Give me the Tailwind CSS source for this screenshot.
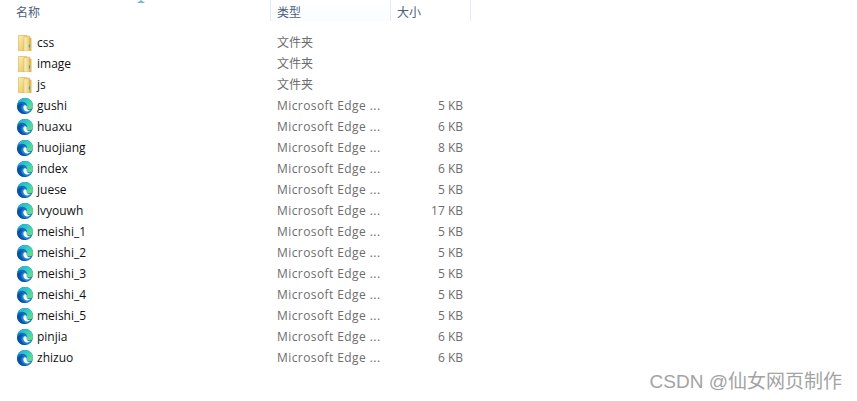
<!DOCTYPE html>
<html>
<head>
<meta charset="utf-8">
<script src="https://cdn.jsdelivr.net/npm/@tailwindcss/browser@4"></script>
</head>
<body class="relative w-[857px] h-[401px] overflow-hidden bg-white font-['Open_Sans','Noto_Sans_CJK_SC',sans-serif] text-[12px]">
<svg width="0" height="0" class="absolute">
<defs>
<linearGradient id="f1" x1="0" y1="0" x2="1" y2="1"><stop offset="0" stop-color="#fbeeac"/><stop offset="1" stop-color="#e3c05e"/></linearGradient>
<linearGradient id="f2" x1="0" y1="0" x2="1" y2="0"><stop offset="0" stop-color="#fdf3c0"/><stop offset="1" stop-color="#ebcb70"/></linearGradient>
<linearGradient id="e1" x1="0" y1="0" x2="1" y2="1"><stop offset="0" stop-color="#1fa9dc"/><stop offset=".5" stop-color="#35cfc0"/><stop offset="1" stop-color="#7be06a"/></linearGradient>
<symbol id="folder" viewBox="0 0 16 16">
<path d="M1.500 .500h6.500l6.500 2.500v13H1.500z" fill="#dfb955"/>
<path d="M1.500 .500h8.500v15.500H1.500z" fill="url(#f1)" stroke="#d9b557" stroke-width=".5"/>
<path d="M7 1.800l5.500 -.800v15H7z" fill="url(#f2)" stroke="#d0ab50" stroke-width=".5"/>
<rect x="11.800" y="9.500" width="1.200" height="3" fill="#3f9ad8"/>
</symbol>
<symbol id="edge" viewBox="0 0 16 16">
<circle cx="8" cy="8" r="8" fill="#0e6cc2"/>
<path d="M.600 5C2 1.500 5 0 8 0c4.600 0 8 3.500 8 8 0 2.200-1.500 3.400-3.400 3.400-1.700 0-3.200-.8-3.300-1.400.8-.6 1.100-1.700.7-2.800C9.500 5 7.500 3.800 5.500 3.800 3.500 3.800 1.800 4.200.600 5z" fill="url(#e1)"/>
<path d="M6.200 6.300C4 6.800 3.200 9.500 4.200 11.700c1 2.200 3.300 3.700 5.800 4-1 .3-1.700.3-2.400.3C3 16 0 12.500 0 8.500 1.200 5.800 4.500 5 6.200 6.300z" fill="#0a52a6"/>
<path d="M6.400 6.400c1.500-.5 3.200.3 3.500 1.800-.9 1.100-.8 2.600.7 3.400 1.100.6 2.700.6 4.200 0-.9 1.600-2.700 3.300-4.800 3.500-3-.3-5-2.200-5.400-4.500-.2-1.800.5-3.300 1.800-4.200z" fill="#1f86d6"/>
<path d="M7.400 7.400c.9-.2 1.900.2 2.400 1-.5 1.200-.2 2.500 1 3.300.9.500 1.800.6 2.700.4-.8.9-1.900 1.400-3.100 1.400C8.300 13.500 6.700 12 6.400 10.200 6.200 9 6.500 8 7.400 7.400z" fill="#ffffff"/>
</symbol>
</defs>
</svg>

<div class="absolute left-[137px] top-0 w-0 h-0 border-x-[4px] border-x-transparent border-b-[3px] border-b-[#7fb3dc]"></div>

<div class="flex h-[21px] text-[#4c607a] leading-[25px]">
  <div class="w-[270px] pl-[16px]">名称</div>
  <div class="w-[120px] pl-[6px] border-l border-[#e3ebf4] bg-gradient-to-b from-white to-[#fbfcfe]">类型</div>
  <div class="w-[81px] pl-[6px] border-x border-[#e3ebf4]">大小</div>
</div>

<div class="flex flex-col pt-[11px] leading-[21px] text-[#6d6d6d]">
  <div class="flex h-[21px] items-center"><svg class="ml-[17px] w-[16px] h-[16px]"><use href="#folder"/></svg><span class="ml-[4px] w-[240px] text-[#111111]">css</span><span>文件夹</span></div>
  <div class="flex h-[21px] items-center"><svg class="ml-[17px] w-[16px] h-[16px]"><use href="#folder"/></svg><span class="ml-[4px] w-[240px] text-[#111111]">image</span><span>文件夹</span></div>
  <div class="flex h-[21px] items-center"><svg class="ml-[17px] w-[16px] h-[16px]"><use href="#folder"/></svg><span class="ml-[4px] w-[240px] text-[#111111]">js</span><span>文件夹</span></div>
  <div class="flex h-[21px] items-center"><svg class="ml-[17px] w-[16px] h-[16px]"><use href="#edge"/></svg><span class="ml-[4px] w-[240px] text-[#111111]">gushi</span><span class="w-[120px] tracking-[0.42px]">Microsoft Edge ...</span><span class="w-[66px] text-right">5 KB</span></div>
  <div class="flex h-[21px] items-center"><svg class="ml-[17px] w-[16px] h-[16px]"><use href="#edge"/></svg><span class="ml-[4px] w-[240px] text-[#111111]">huaxu</span><span class="w-[120px] tracking-[0.42px]">Microsoft Edge ...</span><span class="w-[66px] text-right">6 KB</span></div>
  <div class="flex h-[21px] items-center"><svg class="ml-[17px] w-[16px] h-[16px]"><use href="#edge"/></svg><span class="ml-[4px] w-[240px] text-[#111111]">huojiang</span><span class="w-[120px] tracking-[0.42px]">Microsoft Edge ...</span><span class="w-[66px] text-right">8 KB</span></div>
  <div class="flex h-[21px] items-center"><svg class="ml-[17px] w-[16px] h-[16px]"><use href="#edge"/></svg><span class="ml-[4px] w-[240px] text-[#111111]">index</span><span class="w-[120px] tracking-[0.42px]">Microsoft Edge ...</span><span class="w-[66px] text-right">6 KB</span></div>
  <div class="flex h-[21px] items-center"><svg class="ml-[17px] w-[16px] h-[16px]"><use href="#edge"/></svg><span class="ml-[4px] w-[240px] text-[#111111]">juese</span><span class="w-[120px] tracking-[0.42px]">Microsoft Edge ...</span><span class="w-[66px] text-right">5 KB</span></div>
  <div class="flex h-[21px] items-center"><svg class="ml-[17px] w-[16px] h-[16px]"><use href="#edge"/></svg><span class="ml-[4px] w-[240px] text-[#111111]">lvyouwh</span><span class="w-[120px] tracking-[0.42px]">Microsoft Edge ...</span><span class="w-[66px] text-right">17 KB</span></div>
  <div class="flex h-[21px] items-center"><svg class="ml-[17px] w-[16px] h-[16px]"><use href="#edge"/></svg><span class="ml-[4px] w-[240px] text-[#111111]">meishi_1</span><span class="w-[120px] tracking-[0.42px]">Microsoft Edge ...</span><span class="w-[66px] text-right">5 KB</span></div>
  <div class="flex h-[21px] items-center"><svg class="ml-[17px] w-[16px] h-[16px]"><use href="#edge"/></svg><span class="ml-[4px] w-[240px] text-[#111111]">meishi_2</span><span class="w-[120px] tracking-[0.42px]">Microsoft Edge ...</span><span class="w-[66px] text-right">5 KB</span></div>
  <div class="flex h-[21px] items-center"><svg class="ml-[17px] w-[16px] h-[16px]"><use href="#edge"/></svg><span class="ml-[4px] w-[240px] text-[#111111]">meishi_3</span><span class="w-[120px] tracking-[0.42px]">Microsoft Edge ...</span><span class="w-[66px] text-right">5 KB</span></div>
  <div class="flex h-[21px] items-center"><svg class="ml-[17px] w-[16px] h-[16px]"><use href="#edge"/></svg><span class="ml-[4px] w-[240px] text-[#111111]">meishi_4</span><span class="w-[120px] tracking-[0.42px]">Microsoft Edge ...</span><span class="w-[66px] text-right">5 KB</span></div>
  <div class="flex h-[21px] items-center"><svg class="ml-[17px] w-[16px] h-[16px]"><use href="#edge"/></svg><span class="ml-[4px] w-[240px] text-[#111111]">meishi_5</span><span class="w-[120px] tracking-[0.42px]">Microsoft Edge ...</span><span class="w-[66px] text-right">5 KB</span></div>
  <div class="flex h-[21px] items-center"><svg class="ml-[17px] w-[16px] h-[16px]"><use href="#edge"/></svg><span class="ml-[4px] w-[240px] text-[#111111]">pinjia</span><span class="w-[120px] tracking-[0.42px]">Microsoft Edge ...</span><span class="w-[66px] text-right">6 KB</span></div>
  <div class="flex h-[21px] items-center"><svg class="ml-[17px] w-[16px] h-[16px]"><use href="#edge"/></svg><span class="ml-[4px] w-[240px] text-[#111111]">zhizuo</span><span class="w-[120px] tracking-[0.42px]">Microsoft Edge ...</span><span class="w-[66px] text-right">6 KB</span></div>
</div>

<div class="absolute right-[15px] top-[370px] font-['Liberation_Sans','Noto_Sans_CJK_SC',sans-serif] text-[19px] leading-[24px] text-[#a3a3a3]">CSDN @仙女网页制作</div>
</body>
</html>
